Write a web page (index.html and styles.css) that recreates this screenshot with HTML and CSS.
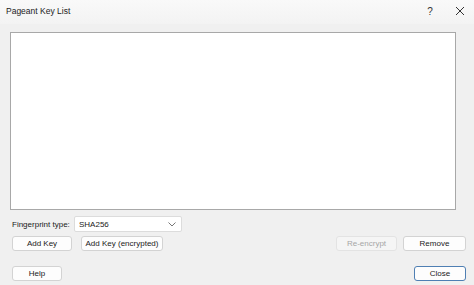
FILE: index.html
```html
<!DOCTYPE html>
<html lang="en">
<head>
    <meta charset="UTF-8">
    <title>Pageant Key List</title>
    <link rel="stylesheet" href="styles.css">
</head>
<body>
    <div class="window">
        <!-- title bar -->
        <div class="titlebar">
            <span class="title">Pageant Key List</span>
            <span class="title-btn help-btn">?</span>
            <span class="title-btn close-x">
                <svg width="10" height="10" viewBox="0 0 10 10">
                    <path d="M1 1 L9 9 M9 1 L1 9" stroke="#333" stroke-width="1"/>
                </svg>
            </span>
        </div>

        <div class="content">
            <div class="key-list"></div>

            <div class="fp-row">
                <span class="fp-label">Fingerprint type:</span>
                <div class="combo">
                    <span>SHA256</span>
                    <svg width="8" height="5" viewBox="0 0 8 5">
                        <path d="M0.5 0.5 L4 4 L7.5 0.5" fill="none" stroke="#777" stroke-width="1"/>
                    </svg>
                </div>
            </div>

            <div class="btn-row">
                <button class="btn btn-add">Add Key</button>
                <button class="btn btn-add-enc">Add Key (encrypted)</button>
                <span class="spacer"></span>
                <button class="btn btn-reenc" disabled>Re-encrypt</button>
                <button class="btn btn-remove">Remove</button>
            </div>

            <div class="btn-row bottom-row">
                <button class="btn btn-help">Help</button>
                <span class="spacer"></span>
                <button class="btn btn-close default">Close</button>
            </div>
        </div>
    </div>
</body>
</html>
```

FILE: styles.css
```css
body {
    margin: 0;
    padding: 0;
    font-family: "Liberation Sans", Arial, sans-serif;
    font-size: 8px;
    color: #1a1a1a;
    background-color: #f0f0f0;
    white-space: nowrap;
}

.window {
    width: 474px;
    height: 285px;
    display: flex;
    flex-direction: column;
    background-color: #f0f0f0;
    overflow: hidden;
}

.titlebar {
    height: 24px;
    display: flex;
    align-items: center;
    background: linear-gradient(#f9f9f9, #f3f3f3);
    padding-left: 6px;
    padding-bottom: 2px;
    box-sizing: border-box;
}

.title {
    flex: 1;
    font-size: 8.5px;
    color: #222;
}

.title-btn {
    width: 32px;
    display: flex;
    justify-content: center;
    align-items: center;
    color: #333;
}

.help-btn {
    font-size: 10px;
    margin-right: 0;
}

.close-x {
    width: 28px;
    margin-right: 0;
}

.content {
    flex: 1;
    display: flex;
    flex-direction: column;
    padding: 8px 8px 0 10px;
}

.key-list {
    width: 444px;
    height: 176px;
    background-color: #ffffff;
    border: 1px solid #a8a8a8;
}

.fp-row {
    display: flex;
    align-items: center;
    margin-top: 6px;
    padding-left: 2px;
}

.fp-label {
    width: 62px;
}

.combo {
    width: 97px;
    height: 14px;
    display: flex;
    align-items: center;
    justify-content: space-between;
    padding: 0 5px 0 4px;
    background-color: #ffffff;
    border: 1px solid #dcdcdc;
    border-radius: 2px;
}

.btn-row {
    display: flex;
    align-items: center;
    margin-top: 4px;
    padding-left: 2px;
}

.bottom-row {
    margin-top: 15px;
}

.spacer {
    flex: 1;
}

.btn {
    height: 15px;
    padding: 0;
    font-family: inherit;
    font-size: 8px;
    color: #1a1a1a;
    background-color: #fdfdfd;
    border: 1px solid #d3d3d3;
    border-radius: 3px;
}

.btn-add { width: 60px; }
.btn-add-enc { width: 82px; margin-left: 9px; }
.btn-reenc { width: 61px; color: #a6a6a6; background-color: #f5f5f5; border-color: #e3e3e3; }
.btn-remove { width: 63px; margin-left: 6px; }
.btn-help { width: 50px; }
.btn-close { width: 52px; }

.default {
    border-color: #4f7fb3;
}
```
